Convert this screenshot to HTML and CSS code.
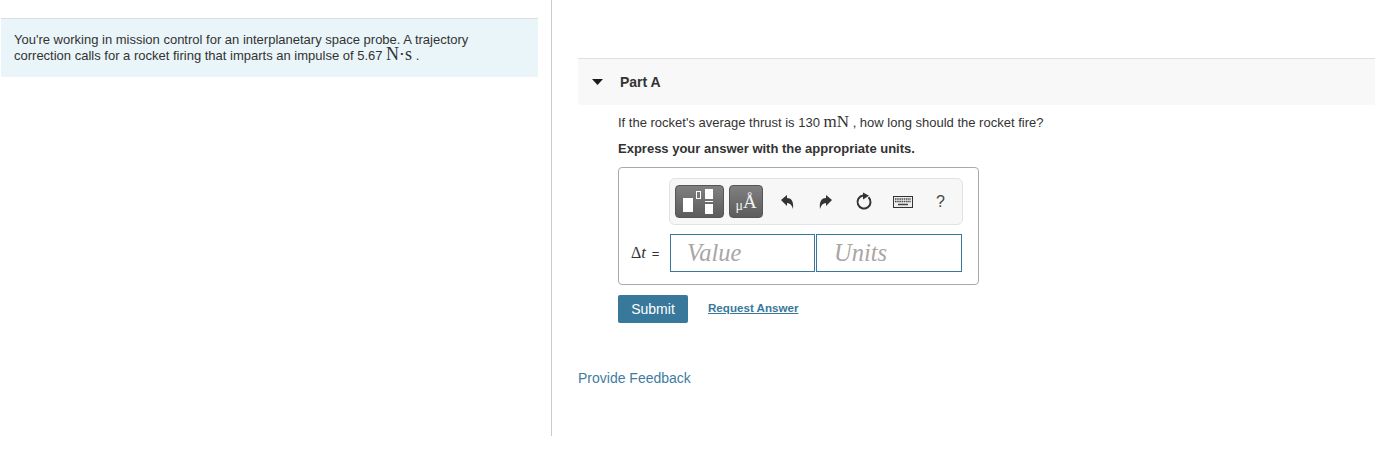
FILE: index.html
```html
<!DOCTYPE html>
<html lang="en">
<head>
<meta charset="utf-8">
<title>Part A</title>
<link rel="stylesheet" href="styles.css">
</head>
<body>
<div class="page">
  <aside class="left">
    <div class="intro">You're working in mission control for an interplanetary space probe. A trajectory correction calls for a rocket firing that imparts an impulse of 5.67 <span class="math">N⋅s</span> .</div>
  </aside>
  <main class="right">
    <header class="part-head">
      <svg class="caret" width="11" height="6" viewBox="0 0 11 6"><path d="M0 0H11L5.5 6Z" fill="#1c1c1c"/></svg>
      <h2 class="part-title">Part A</h2>
    </header>
    <section class="part-body">
      <p class="question">If the rocket's average thrust is 130 <span class="math-m">mN</span> , how long should the rocket fire?</p>
      <p class="express">Express your answer with the appropriate units.</p>
      <div class="editor">
        <div class="toolbar">
          <button class="tool tool-frac" type="button" aria-label="Templates">
            <svg width="47" height="31" viewBox="1 1 47 31">
              <rect x="8" y="13" width="10" height="14" fill="#fff"/>
              <rect x="21.500" y="6.500" width="4" height="7" fill="none" stroke="#fff"/>
              <rect x="30" y="4" width="8" height="10" fill="#fff"/>
              <rect x="30" y="16" width="8" height="1" fill="#fff"/>
              <rect x="30" y="19" width="8" height="10" fill="#fff"/>
            </svg>
          </button>
          <button class="tool tool-unit" type="button" aria-label="Units"><span class="mu">μ</span><span class="ang">Å</span></button>
          <div class="actions">
            <svg class="act" width="14" height="16" viewBox="0 0 14 16"><path d="M1 6L7 1V4C11 4 14 7 13 15C12 11 10 9 7 9V12Z" fill="#333"/></svg>
            <svg class="act" width="14" height="16" viewBox="0 0 14 16"><path d="M13 6L7 1V4C3 4 0 7 1 15C2 11 4 9 7 9V12Z" fill="#333"/></svg>
            <svg class="act" width="18" height="20" viewBox="0 0 18 20"><path d="M8 3.600A6.500 6.500 0 1 0 13.500 5.300" fill="none" stroke="#333" stroke-width="2"/><path d="M8 .5L14 3.800L8 7.500Z" fill="#333"/></svg>
            <svg class="act" width="20" height="12" viewBox="0 0 20 12"><rect x=".5" y=".5" width="19" height="11" fill="#eee" stroke="#333"/><path d="M2 3H18M2 5.500H18" stroke="#444" stroke-width="1.500" stroke-dasharray="1.500 .7"/><path d="M5 8.500H15" stroke="#444" stroke-width="1.500"/></svg>
            <span class="help">?</span>
          </div>
        </div>
        <div class="answer-row">
          <span class="label"><span class="delta">Δ</span><i class="t">t</i> =</span>
          <div class="field">Value</div>
          <div class="field field-units">Units</div>
        </div>
      </div>
      <div class="buttons">
        <button class="submit" type="button">Submit</button>
        <a class="request" href="#">Request Answer</a>
      </div>
    </section>
    <a class="feedback" href="#">Provide Feedback</a>
  </main>
</div>
</body>
</html>
```
FILE: styles.css
```css
* { box-sizing: border-box; }
html, body { margin: 0; padding: 0; background: #fff; }
body {
  font-family: "Liberation Sans", Arial, sans-serif;
  font-size: 13px;
  color: #333;
  height: 459px;
  overflow: hidden;
}
.page { display: flex; align-items: flex-start; }
.left {
  width: 552px;
  height: 436px;
  padding: 18px 13px 0 1px;
  border-right: 1px solid #c4ccd6;
  flex: none;
}
.intro {
  background: #e9f5f8;
  border-top: 1px solid #dadfe1;
  height: 59px;
  padding: 13px 13px 0;
  font-size: 13px;
  line-height: 16px;
  color: #333;
}
.math, .math-m {
  font-family: "Liberation Serif", "Times New Roman", serif;
  font-size: 18px;
  line-height: 0;
  color: #333;
}
.right { flex: 1; padding: 58px 0 0 26px; }
.part-head {
  display: flex;
  align-items: center;
  height: 47px;
  background: #f8f8f8;
  border-top: 1px solid #e0e0e0;
  padding-left: 14px;
}
.caret { flex: none; margin-right: 17px; }
.part-title { margin: 0; font-size: 14px; font-weight: bold; color: #333; }
.part-body { padding: 8px 0 0 40px; }
.question { margin: 0; line-height: 20px; font-size: 13px; height: 20px; }
.math-m { font-size: 17px; }
.express { margin: 7px 0 0; font-weight: bold; font-size: 13px; line-height: 18px; }
.editor {
  width: 361px;
  height: 118px;
  margin-top: 9px;
  border: 1px solid #aaa;
  border-radius: 4px;
  padding: 10px 15px 0 50px;
}
.toolbar {
  display: flex;
  align-items: center;
  width: 294px;
  height: 47px;
  padding-left: 5px;
  background: #f7f7f7;
  border: 1px solid #e2e2e2;
  border-radius: 6px;
}
.tool {
  display: flex;
  align-items: center;
  justify-content: center;
  height: 33px;
  padding: 0;
  border: 1px solid #555;
  border-radius: 4px;
  background: linear-gradient(#808080, #5c5c5c);
}
.tool-frac { width: 49px; margin-right: 5px; }
.tool-unit {
  width: 34px;
  color: #f2f2f2;
  font-family: "Liberation Serif", serif;
  align-items: flex-end;
  padding-bottom: 3px;
}
.mu { font-size: 14px; }
.ang { font-size: 19px; line-height: 24px; }
.actions {
  display: flex;
  align-items: center;
  margin-left: 17px;
}
.act { flex: none; }
.actions .act:nth-child(1) { margin-right: 25px; }
.actions .act:nth-child(2) { margin-right: 22px; }
.actions .act:nth-child(3) { margin-right: 20px; }
.help { margin-left: 23px; font-size: 16px; color: #444; }
.answer-row { display: flex; align-items: center; margin-top: 9px; height: 38px; margin-left: 1px; }
.label {
  width: 51px;
  margin-left: -51px;
  padding-left: 12px;
  flex: none;
  font-size: 13px;
}
.delta { font-family: "Liberation Serif", serif; font-size: 16px; }
.t { font-family: "Liberation Serif", serif; font-size: 17px; margin-right: 2px; }
.field {
  width: 145px;
  height: 38px;
  margin-right: 1px;
  padding-left: 16px;
  border: 1px solid #37789b;
  font-family: "Liberation Serif", serif;
  font-style: italic;
  font-size: 24.500px;
  line-height: 36px;
  color: #a9a6a3;
  flex: none;
}
.field-units { width: 146px; margin-right: 0; padding-left: 17px; }
.buttons { display: flex; align-items: center; margin-top: 10px; }
.submit {
  width: 70px;
  height: 28px;
  padding: 0;
  border: 0;
  border-radius: 2px;
  background: #37789b;
  color: #fff;
  font-family: inherit;
  font-size: 14px;
}
.request {
  margin-left: 20px;
  margin-bottom: 4px;
  font-size: 11.600px;
  font-weight: bold;
  color: #37789b;
  text-decoration: underline;
}
.feedback {
  display: block;
  margin-top: 47px;
  font-size: 14px;
  line-height: 16px;
  color: #3f7d9f;
  text-decoration: none;
}
```
